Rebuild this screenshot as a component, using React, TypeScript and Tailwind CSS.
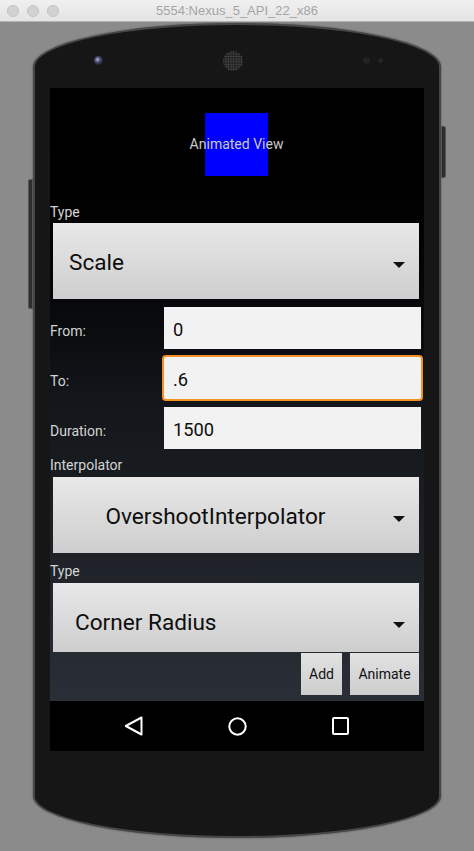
import React from 'react';

const roboto = "font-['Roboto',_sans-serif]";

const Arrow = () => (
  <div className="w-0 h-0 border-l-[6.5px] border-r-[6.5px] border-t-[6px] border-l-transparent border-r-transparent border-t-[#111]" />
);

const Spinner: React.FC<{ text: string; box: string; textBox: string }> = ({ text, box, textBox }) => (
  <div className={`ml-[3px] mr-[5px] flex items-center bg-linear-to-b from-[#e8e8e8] to-[#cecece] ${box}`}>
    <div className={`flex-1 text-[22.6px] text-[#0e0e0e] whitespace-nowrap ${textBox}`}>{text}</div>
    <div className="ml-[15px] mr-[14px] mt-[4px]">
      <Arrow />
    </div>
  </div>
);

const Field: React.FC<{ label: string; value: string; focused?: boolean }> = ({ label, value, focused }) => (
  <div className="flex items-center h-[42px]">
    <div className="w-[114px] pt-[6px] text-[14px] text-[#d4d4d4]">{label}</div>
    <div
      className={`flex-1 mr-[3px] h-full bg-[#f2f2f2] flex items-center pl-[9px] pt-[3px] text-[18.3px] text-[#0e0e0e] ${
        focused ? 'ring-2 ring-[#f39222] rounded-[2px]' : ''
      }`}
    >
      {value}
    </div>
  </div>
);

const Speaker = () => (
  <svg width="22" height="22" viewBox="0 0 22 22">
    <defs>
      <pattern id="mesh" width="2.6" height="2.6" patternUnits="userSpaceOnUse">
        <circle cx="1.3" cy="1.3" r="0.7" fill="#5a5a5a" />
      </pattern>
    </defs>
    <circle cx="11" cy="11" r="10" fill="#242424" />
    <circle cx="11" cy="11" r="10" fill="url(#mesh)" />
  </svg>
);

const NavBar = () => (
  <div className="h-[50px] bg-black flex items-center justify-center gap-[85px] pr-[2px]">
    <svg width="19" height="20" viewBox="0 0 19 20">
      <path d="M17.5 1.5 L1.8 10 L17.5 18.5 Z" fill="none" stroke="#fff" strokeWidth="2" strokeLinejoin="round" />
    </svg>
    <svg width="19" height="19" viewBox="0 0 19 19">
      <circle cx="9.5" cy="9.5" r="8.2" fill="none" stroke="#fff" strokeWidth="2" />
    </svg>
    <svg width="17" height="18" viewBox="0 0 17 18">
      <rect x="1" y="1" width="15" height="16" rx="1" fill="none" stroke="#fff" strokeWidth="2" />
    </svg>
  </div>
);

export default function App() {
  return (
    <div className="w-full h-[851px] bg-[#8b8b8b] flex flex-col overflow-hidden">
      {/* window title bar */}
      <div className="h-[22px] shrink-0 grid grid-cols-[1fr_auto_1fr] items-center bg-linear-to-b from-[#f0f0f0] to-[#e4e4e4] border-b border-[#b4b4b4]">
        <div className="flex gap-[8px] pl-[7px]">
          <div className="w-[12px] h-[12px] rounded-full bg-[#d2d2d2] border border-[#c2c2c2]" />
          <div className="w-[12px] h-[12px] rounded-full bg-[#d2d2d2] border border-[#c2c2c2]" />
          <div className="w-[12px] h-[12px] rounded-full bg-[#d2d2d2] border border-[#c2c2c2]" />
        </div>
        <span className="font-['Liberation_Sans',_sans-serif] text-[13px] text-[#a4a4a4]">5554:Nexus_5_API_22_x86</span>
        <div />
      </div>

      <div className="flex-1 pt-[1px]">
        {/* phone body */}
        <div className="relative mx-auto w-[408px] h-[815px] bg-[#161616] border-2 border-[#464646] rounded-tl-[204px_44px] rounded-tr-[204px_44px] rounded-bl-[204px_42px] rounded-br-[204px_42px] px-[15px] shadow-[0_0_2px_rgba(0,0,0,0.5)]">
          <div className="absolute -left-[7px] top-[154px] w-[5px] h-[130px] rounded-l-[2px] bg-[#2e2e2e] border border-[#555]" />
          <div className="absolute -right-[7px] top-[101px] w-[5px] h-[52px] rounded-r-[2px] bg-[#2e2e2e] border border-[#555]" />

          {/* earpiece, camera, sensors */}
          <div className="h-[63px] pt-[8px] flex items-center justify-between pl-[44px] pr-[41px]">
            <div className="w-[9px] h-[9px] rounded-full bg-[radial-gradient(circle_at_40%_40%,#b4b4d8_0%,#4a4a70_35%,#141420_80%)]" />
            <Speaker />
            <div className="flex items-center gap-[8px]">
              <div className="w-[7px] h-[7px] rounded-full bg-[#222]" />
              <div className="w-[5px] h-[5px] rounded-full bg-[#242424]" />
            </div>
          </div>

          {/* screen */}
          <div className={`w-[374px] ${roboto}`}>
            <div className="h-[613px] bg-linear-to-b from-[#000000] via-[#121519] to-[#2a2f37] pt-[25px] pb-[6px] flex flex-col">
              <div className="flex justify-center pr-[1px]">
                <div className="w-[63px] h-[63px] bg-[#0000ff] flex items-center justify-center">
                  <span className="whitespace-nowrap text-[14px] text-[#cacaca]">Animated View</span>
                </div>
              </div>

              <div className="mt-[28px] h-[17px] leading-[17px] text-[14px] text-[#d4d4d4]">Type</div>
              <div className="mt-[2px]">
                <Spinner text="Scale" box="h-[76px] pt-[3px]" textBox="pl-[16px]" />
              </div>

              <div className="mt-[8px] flex flex-col gap-[8px]">
                <Field label="From:" value="0" />
                <Field label="To:" value=".6" focused />
                <Field label="Duration:" value="1500" />
              </div>

              <div className="mt-[8px] h-[17px] leading-[17px] text-[14px] text-[#d4d4d4]">Interpolator</div>
              <div className="mt-[3px]">
                <Spinner text="OvershootInterpolator" box="h-[76px] pt-[3px]" textBox="text-center" />
              </div>

              <div className="mt-[10px] h-[17px] leading-[17px] text-[14px] text-[#d4d4d4]">Type</div>
              <div className="mt-[3px]">
                <Spinner text="Corner Radius" box="h-[69px] pt-[11px]" textBox="pl-[22px]" />
              </div>

              <div className="mt-[1px] mr-[5px] flex justify-end gap-[8px]">
                <button className="h-[42px] w-[41px] bg-linear-to-b from-[#e2e2e2] to-[#cdcdcd] text-[14px] text-[#111]">Add</button>
                <button className="h-[42px] w-[69px] bg-linear-to-b from-[#e2e2e2] to-[#cdcdcd] text-[14px] text-[#111]">Animate</button>
              </div>
            </div>
            <NavBar />
          </div>
        </div>
      </div>
    </div>
  );
}
